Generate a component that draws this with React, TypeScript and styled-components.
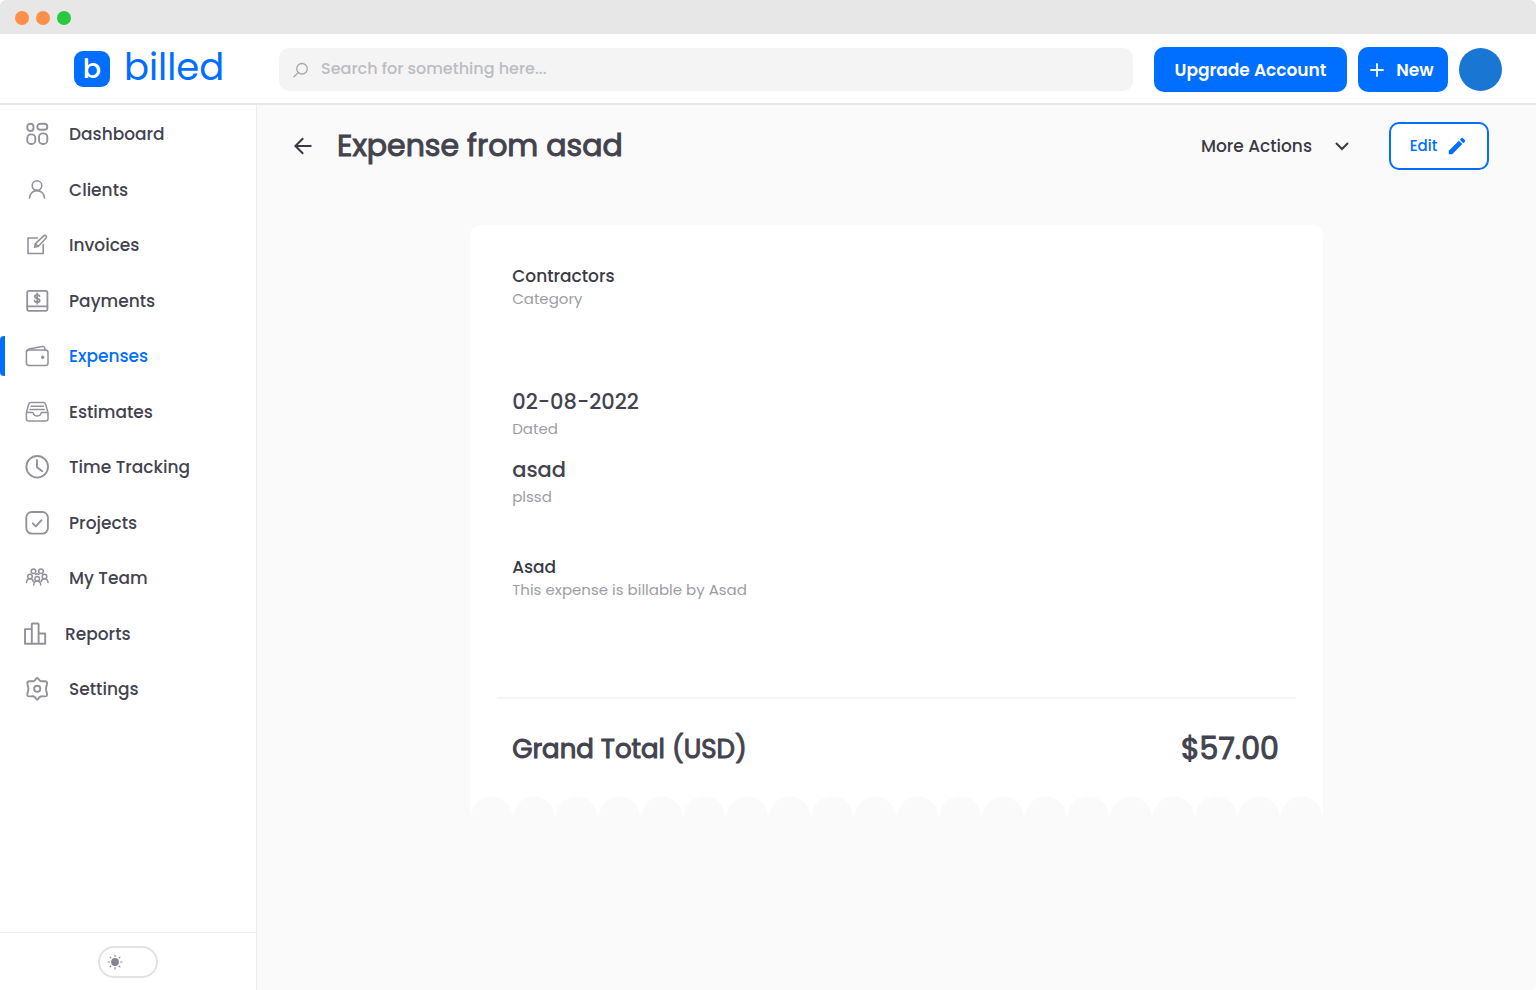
import React from "react";
import styled, { createGlobalStyle, css } from "styled-components";

const color = {
  blue: "#006eff",
  ink: "#43434f",
  strong: "#3a3a45",
  muted: "#9d9da6",
  icon: "#92929d",
  line: "#e8e8ea",
  canvas: "#fafafa",
};

const GlobalStyle = createGlobalStyle`
  *, *::before, *::after { box-sizing: border-box; }
  body {
    margin: 0;
    background: #ffffff;
    color: ${color.ink};
    font-family: Poppins, Inter, "Liberation Sans", sans-serif;
    font-size: 17px;
    line-height: 24px;
  }
  h1, h2, p, ul, dl, dd { margin: 0; padding: 0; }
  button, input { font: inherit; }
  button { cursor: pointer; }
`;

const displayText = css`
  font-weight: 400;
  -webkit-text-stroke: 1px currentColor;
`;

const Window = styled.div`
  display: flex;
  flex-direction: column;
  min-height: 100vh;
  border-radius: 6px;
  overflow: hidden;
`;

const TitleBar = styled.div`
  display: flex;
  align-items: center;
  gap: 7px;
  height: 34px;
  padding: 2px 15px 0;
  background: #e7e7e7;
`;

const Light = styled.span<{ $tone: string }>`
  width: 14px;
  height: 14px;
  border-radius: 50%;
  background: ${(p) => p.$tone};
`;

const Header = styled.header`
  display: flex;
  align-items: center;
  height: 71px;
  padding: 2px 34px 0 74px;
  border-bottom: 2px solid ${color.line};
  background: #ffffff;
`;

const Brand = styled.a`
  display: flex;
  align-items: center;
  gap: 14px;
  width: 205px;
  padding-bottom: 2px;
  color: ${color.blue};
  text-decoration: none;
`;

const BrandMark = styled.span`
  display: grid;
  place-items: center;
  width: 36px;
  height: 36px;
  border-radius: 9px;
  background: ${color.blue};
  color: #ffffff;
  font-size: 27px;
  font-weight: 500;
  line-height: 36px;
`;

const BrandName = styled.span`
  padding-bottom: 4px;
  font-size: 37px;
  line-height: 40px;
`;

const Search = styled.label`
  display: flex;
  flex: 1;
  align-items: center;
  gap: 12px;
  height: 43px;
  margin-right: 21px;
  padding: 0 14px;
  border-radius: 10px;
  background: #f4f4f4;
  color: #a6a6ad;
`;

const SearchInput = styled.input`
  flex: 1;
  min-width: 0;
  padding: 0 0 2px;
  border: 0;
  outline: 0;
  background: transparent;
  color: ${color.ink};
  font-size: 16px;
  &::placeholder { color: #bcbcc2; opacity: 1; font-weight: 500; }
`;

const HeaderActions = styled.div`
  display: flex;
  align-items: center;
  gap: 11px;
`;

const PrimaryButton = styled.button<{ $compact?: boolean }>`
  display: flex;
  align-items: center;
  justify-content: center;
  gap: 12px;
  width: ${(p) => (p.$compact ? 90 : 193)}px;
  height: 45px;
  padding: ${(p) => (p.$compact ? "0 2px 0 0" : "0")};
  border: 0;
  border-radius: 10px;
  background: ${color.blue};
  color: #ffffff;
  font-weight: 600;
`;

const Avatar = styled.button`
  width: 43px;
  height: 43px;
  padding: 0;
  border: 0;
  border-radius: 50%;
  background: #1976d2;
`;

const Body = styled.div`
  display: flex;
  flex: 1;
`;

const Sidebar = styled.aside`
  display: flex;
  flex-direction: column;
  justify-content: space-between;
  width: 257px;
  flex-shrink: 0;
  border-right: 1px solid #ececee;
  background: #ffffff;
`;

const NavList = styled.ul`
  display: flex;
  flex-direction: column;
  justify-content: space-between;
  height: 604px;
  padding-top: 9px;
  list-style: none;
`;

const NavLink = styled.a<{ $active?: boolean; $tight?: boolean }>`
  display: flex;
  align-items: center;
  gap: ${(p) => (p.$tight ? 18 : 20)}px;
  height: 40px;
  padding-left: ${(p) => (p.$active ? 20 : p.$tight ? 23 : 25)}px;
  border-left: ${(p) => (p.$active ? `5px solid ${color.blue}` : "0")};
  border-radius: 4px;
  color: ${(p) => (p.$active ? color.blue : color.ink)};
  font-weight: 500;
  text-decoration: none;
`;

const SidebarFooter = styled.div`
  display: flex;
  justify-content: center;
  padding: 13px 0 12px;
  border-top: 1px solid #ededee;
`;

const ThemeSwitch = styled.label`
  display: flex;
  align-items: center;
  width: 60px;
  height: 32px;
  padding-left: 7px;
  border: 2px solid #e2e2e4;
  border-radius: 16px;
  color: #85858f;
  cursor: pointer;
`;

const HiddenCheckbox = styled.input`
  width: 0;
  height: 0;
  margin: 0;
  appearance: none;
`;

const Main = styled.main`
  flex: 1;
  min-width: 0;
  background: ${color.canvas};
`;

const PageHead = styled.div`
  display: flex;
  align-items: center;
  height: 48px;
  margin-top: 17px;
  padding: 0 47px 0 34px;
`;

const BackLink = styled.a`
  display: flex;
  margin-right: 22px;
  color: ${color.strong};
`;

const PageTitle = styled.h1`
  flex: 1;
  font-size: 30px;
  line-height: 48px;
  ${displayText}
`;

const MenuButton = styled.button`
  display: flex;
  align-items: center;
  gap: 20px;
  margin-right: 37px;
  padding: 0;
  border: 0;
  background: transparent;
  color: ${color.strong};
  font-weight: 500;
`;

const EditButton = styled.button`
  display: flex;
  align-items: center;
  justify-content: center;
  gap: 9px;
  width: 100px;
  height: 48px;
  padding: 0;
  border: 2px solid ${color.blue};
  border-radius: 10px;
  background: #ffffff;
  color: ${color.blue};
  font-size: 15px;
  font-weight: 500;
`;

const Receipt = styled.article`
  width: 66.667%;
  margin: 55px auto 0;
  border-radius: 10px 10px 0 0;
  overflow: hidden;
  background: #ffffff;
`;

const Details = styled.dl`
  display: flex;
  flex-direction: column;
  padding: 39px 42px 96px;
`;

const Detail = styled.div<{ $space?: number }>`
  display: flex;
  flex-direction: column-reverse;
  margin-top: ${(p) => p.$space ?? 0}px;
`;

const Caption = styled.dt`
  color: ${color.muted};
  font-size: 15px;
  line-height: 22px;
`;

const Value = styled.dd<{ $large?: boolean }>`
  color: ${(p) => (p.$large ? color.ink : color.strong)};
  font-size: ${(p) => (p.$large ? 21 : 17)}px;
  font-weight: 500;
  line-height: ${(p) => (p.$large ? 32 : 24)}px;
`;

const Total = styled.div`
  display: flex;
  align-items: center;
  justify-content: space-between;
  margin: 0 27px;
  padding: 30px 17px 27px 15px;
  border-top: 2px solid #f4f4f5;
`;

const TotalLabel = styled.h2`
  font-size: 26px;
  line-height: 40px;
  ${displayText}
`;

const TotalAmount = styled.p`
  font-size: 30px;
  line-height: 40px;
  ${displayText}
`;

const Scallops = styled.div`
  height: 20px;
  background-image: radial-gradient(circle at 50% 21px, ${color.canvas} 20px, #ffffff 21px);
  background-size: 43px 20px;
  background-repeat: round no-repeat;
`;

type IconProps = { size?: number; stroke?: number; children: React.ReactNode };

const Icon = ({ size = 24, stroke = 1.6, children }: IconProps) => (
  <svg
    width={size}
    height={size}
    viewBox="0 0 24 24"
    fill="none"
    stroke={color.icon}
    strokeWidth={stroke}
    strokeLinecap="round"
    strokeLinejoin="round"
    aria-hidden="true"
  >
    {children}
  </svg>
);

const navItems: { label: string; icon: React.ReactNode; active?: boolean; tight?: boolean }[] = [
  {
    label: "Dashboard",
    icon: (
      <Icon stroke={1.9}>
        <rect x="2.3" y="1.8" width="6.2" height="7.2" rx="3" />
        <rect x="12.3" y="1.8" width="10" height="6" rx="3" />
        <rect x="2.3" y="12.4" width="8" height="9.6" rx="3.6" />
        <rect x="14" y="11.4" width="8.3" height="10.6" rx="3.8" />
      </Icon>
    ),
  },
  {
    label: "Clients",
    icon: (
      <Icon>
        <circle cx="12" cy="7.6" r="4.8" />
        <path d="M4.5 20c.5-4.500 3.500-7.400 7.500-7.400s7 2.900 7.500 7.400" />
      </Icon>
    ),
  },
  {
    label: "Invoices",
    icon: (
      <Icon>
        <path d="M12.500 5H3v15.500h15.200v-9" strokeLinejoin="miter" />
        <path d="M9.600 14.200l.8-3.600 8.300-7.700c.7-.7 1.700-.6 2.300 0s.6 1.600 0 2.300l-7.700 8.100zM10.400 10.600l2.900 2.700" />
      </Icon>
    ),
  },
  {
    label: "Payments",
    icon: (
      <Icon stroke={1.8}>
        <rect x="2.200" y="1.800" width="20.200" height="20" rx="1.800" />
        <path d="M2 17.400h20.500" />
        <path d="M14.600 7.200c-.3-1-1.200-1.400-2.400-1.400-1.400 0-2.400.6-2.400 1.800 0 2.600 4.900 1.200 4.900 3.900 0 1.200-1.100 1.900-2.500 1.900s-2.400-.6-2.600-1.700M12.200 4.500v10.200" />
      </Icon>
    ),
  },
  {
    label: "Expenses",
    active: true,
    icon: (
      <Icon stroke={1.5}>
        <rect x="1.400" y="6" width="21.600" height="15.400" rx="2.400" />
        <path d="M1.400 8c0-1.800 1-2.500 2.500-2.900L17 2.500c1.600-.3 2.500.4 2.700 1.600L20 6" />
        <circle cx="17.700" cy="13.300" r="1" fill={color.icon} />
      </Icon>
    ),
  },
  {
    label: "Estimates",
    icon: (
      <Icon stroke={1.5}>
        <path d="M1.400 12.600L3.600 4.500c.4-1.400 1-1.900 2.400-1.900h12.300c1.400 0 2 .5 2.400 1.900l2.300 8.100v6.200c0 1.600-.7 2.300-2.200 2.300H3.600c-1.500 0-2.200-.7-2.200-2.300zM1.400 12.600h6.100c.8 0 .9.600 1.100 1.300.4 1.300 1.500 2.100 3.500 2.100s3.200-.8 3.600-2.100c.2-.7.3-1.300 1.100-1.300H23M6 6.300h12.400M5 9.400h14.400" />
      </Icon>
    ),
  },
  {
    label: "Time Tracking",
    icon: (
      <Icon stroke={1.9}>
        <circle cx="12.200" cy="11.800" r="10.800" />
        <path d="M12 5v7.200l5.200 4" />
      </Icon>
    ),
  },
  {
    label: "Projects",
    icon: (
      <Icon stroke={1.9}>
        <rect x="1.300" y="1" width="21.600" height="21.600" rx="5.500" />
        <path d="M7.800 12.400l3 3 5.700-6.200" />
      </Icon>
    ),
  },
  {
    label: "My Team",
    icon: (
      <Icon stroke={1.5}>
        <circle cx="8.500" cy="5.200" r="2.300" />
        <circle cx="16" cy="5.200" r="2.300" />
        <circle cx="5" cy="10.500" r="2.300" />
        <circle cx="19.500" cy="10.500" r="2.300" />
        <circle cx="12.200" cy="12.800" r="2.300" />
        <path d="M1.500 16.500c.2-2.300 1.500-3.700 3.500-3.700s3 1.200 3.300 2.700M23 16.500c-.2-2.300-1.500-3.700-3.500-3.700s-3 1.200-3.300 2.700M8.700 19c.2-2.500 1.500-3.900 3.500-3.900s3.300 1.400 3.500 3.900M10.500 8.500c1-.8 2.400-.8 3.400 0" />
      </Icon>
    ),
  },
  {
    label: "Reports",
    tight: true,
    icon: (
      <Icon stroke={1.900}>
        <path d="M2 21.800V7.100h6.800v14.700M8.800 21.800V2.300c0-.5.2-.8.8-.8h5.200c.6 0 .8.300.8.800v19.500M15.600 11.500h6.600v10.300H2" />
      </Icon>
    ),
  },
  {
    label: "Settings",
    icon: (
      <Icon stroke={1.900}>
        <circle cx="12.200" cy="11.800" r="3.100" />
        <path d="M12.200.9c1 0 1.500 2.500 3.300 3.200 1.900.8 5.300-.8 6.300.8 1 1.700-.8 4.300-.8 6.900s1.800 5.200.8 6.900c-1 1.600-4.400 0-6.300.8-1.800.7-2.300 3.200-3.300 3.200s-1.500-2.500-3.300-3.200c-1.900-.8-5.300.8-6.300-.8-1-1.700.8-4.300.8-6.900S1.600 6.600 2.600 4.900c1-1.600 4.400 0 6.300-.8C10.700 3.400 11.200.9 12.200.9z" />
      </Icon>
    ),
  },
];

const details: { value: string; caption: string; large?: boolean; space?: number }[] = [
  { value: "Contractors", caption: "Category" },
  { value: "02-08-2022", caption: "Dated", large: true, space: 76 },
  { value: "asad", caption: "plssd", large: true, space: 14 },
  { value: "Asad", caption: "This expense is billable by Asad", space: 47 },
];

export default function App() {
  return (
    <>
      <GlobalStyle />
      <Window>
        <TitleBar>
          <Light $tone="#fd8f4a" />
          <Light $tone="#fd8f4a" />
          <Light $tone="#28c840" />
        </TitleBar>

        <Header>
          <Brand href="#">
            <BrandMark>b</BrandMark>
            <BrandName>billed</BrandName>
          </Brand>
          <Search>
            <svg width="16" height="16" viewBox="0 0 16 16" fill="none" stroke="currentColor" strokeWidth="1.300" strokeLinecap="round" aria-hidden="true">
              <circle cx="9" cy="6.800" r="5.300" />
              <path d="M5.200 10.600L1 14.800" />
            </svg>
            <SearchInput type="search" aria-label="Search" placeholder="Search for something here..." />
          </Search>
          <HeaderActions>
            <PrimaryButton type="button">Upgrade Account</PrimaryButton>
            <PrimaryButton type="button" $compact>
              <svg width="14" height="14" viewBox="0 0 14 14" stroke="currentColor" strokeWidth="1.800" strokeLinecap="round" aria-hidden="true">
                <path d="M7 1v12M1 7h12" />
              </svg>
              New
            </PrimaryButton>
            <Avatar type="button" aria-label="Account" />
          </HeaderActions>
        </Header>

        <Body>
          <Sidebar>
            <nav>
              <NavList>
                {navItems.map((item) => (
                  <li key={item.label}>
                    <NavLink href="#" $active={item.active} $tight={item.tight}>
                      {item.icon}
                      {item.label}
                    </NavLink>
                  </li>
                ))}
              </NavList>
            </nav>
            <SidebarFooter>
              <ThemeSwitch>
                <HiddenCheckbox type="checkbox" aria-label="Dark mode" />
                <svg width="16" height="16" viewBox="0 0 16 16" fill="currentColor" aria-hidden="true">
                  <circle cx="8" cy="8" r="3.900" />
                  <path
                    d="M8 1v1.300M8 13.700V15M1 8h1.300M13.700 8H15M3.100 3.100l.7.7M12.200 12.200l.7.7M3.100 12.900l.7-.7M12.200 3.800l.7-.7"
                    stroke="currentColor"
                    strokeWidth="1.200"
                    strokeLinecap="round"
                  />
                </svg>
              </ThemeSwitch>
            </SidebarFooter>
          </Sidebar>

          <Main>
            <PageHead>
              <BackLink href="#" aria-label="Back to expenses">
                <svg width="24" height="24" viewBox="0 0 24 24" fill="none" stroke="currentColor" strokeWidth="2" aria-hidden="true">
                  <path d="M20.500 12H5M12.200 4.200L4.400 12l7.800 7.800" />
                </svg>
              </BackLink>
              <PageTitle>Expense from asad</PageTitle>
              <MenuButton type="button" aria-haspopup="menu">
                More Actions
                <svg width="20" height="20" viewBox="0 0 20 20" fill="none" stroke="currentColor" strokeWidth="2" aria-hidden="true">
                  <path d="M4 7l6 6 6-6" />
                </svg>
              </MenuButton>
              <EditButton type="button">
                Edit
                <svg width="22" height="22" viewBox="0 0 24 24" fill="currentColor" aria-hidden="true">
                  <path d="M3 17.250V21h3.750L17.810 9.940l-3.750-3.750L3 17.250zM20.710 7.040a1 1 0 0 0 0-1.410l-2.340-2.340a1 1 0 0 0-1.410 0l-1.830 1.830 3.750 3.750 1.830-1.830z" />
                </svg>
              </EditButton>
            </PageHead>

            <Receipt>
              <Details>
                {details.map((d) => (
                  <Detail key={d.caption} $space={d.space}>
                    <Caption>{d.caption}</Caption>
                    <Value $large={d.large}>{d.value}</Value>
                  </Detail>
                ))}
              </Details>
              <Total>
                <TotalLabel>Grand Total (USD)</TotalLabel>
                <TotalAmount>$57.00</TotalAmount>
              </Total>
              <Scallops />
            </Receipt>
          </Main>
        </Body>
      </Window>
    </>
  );
}
